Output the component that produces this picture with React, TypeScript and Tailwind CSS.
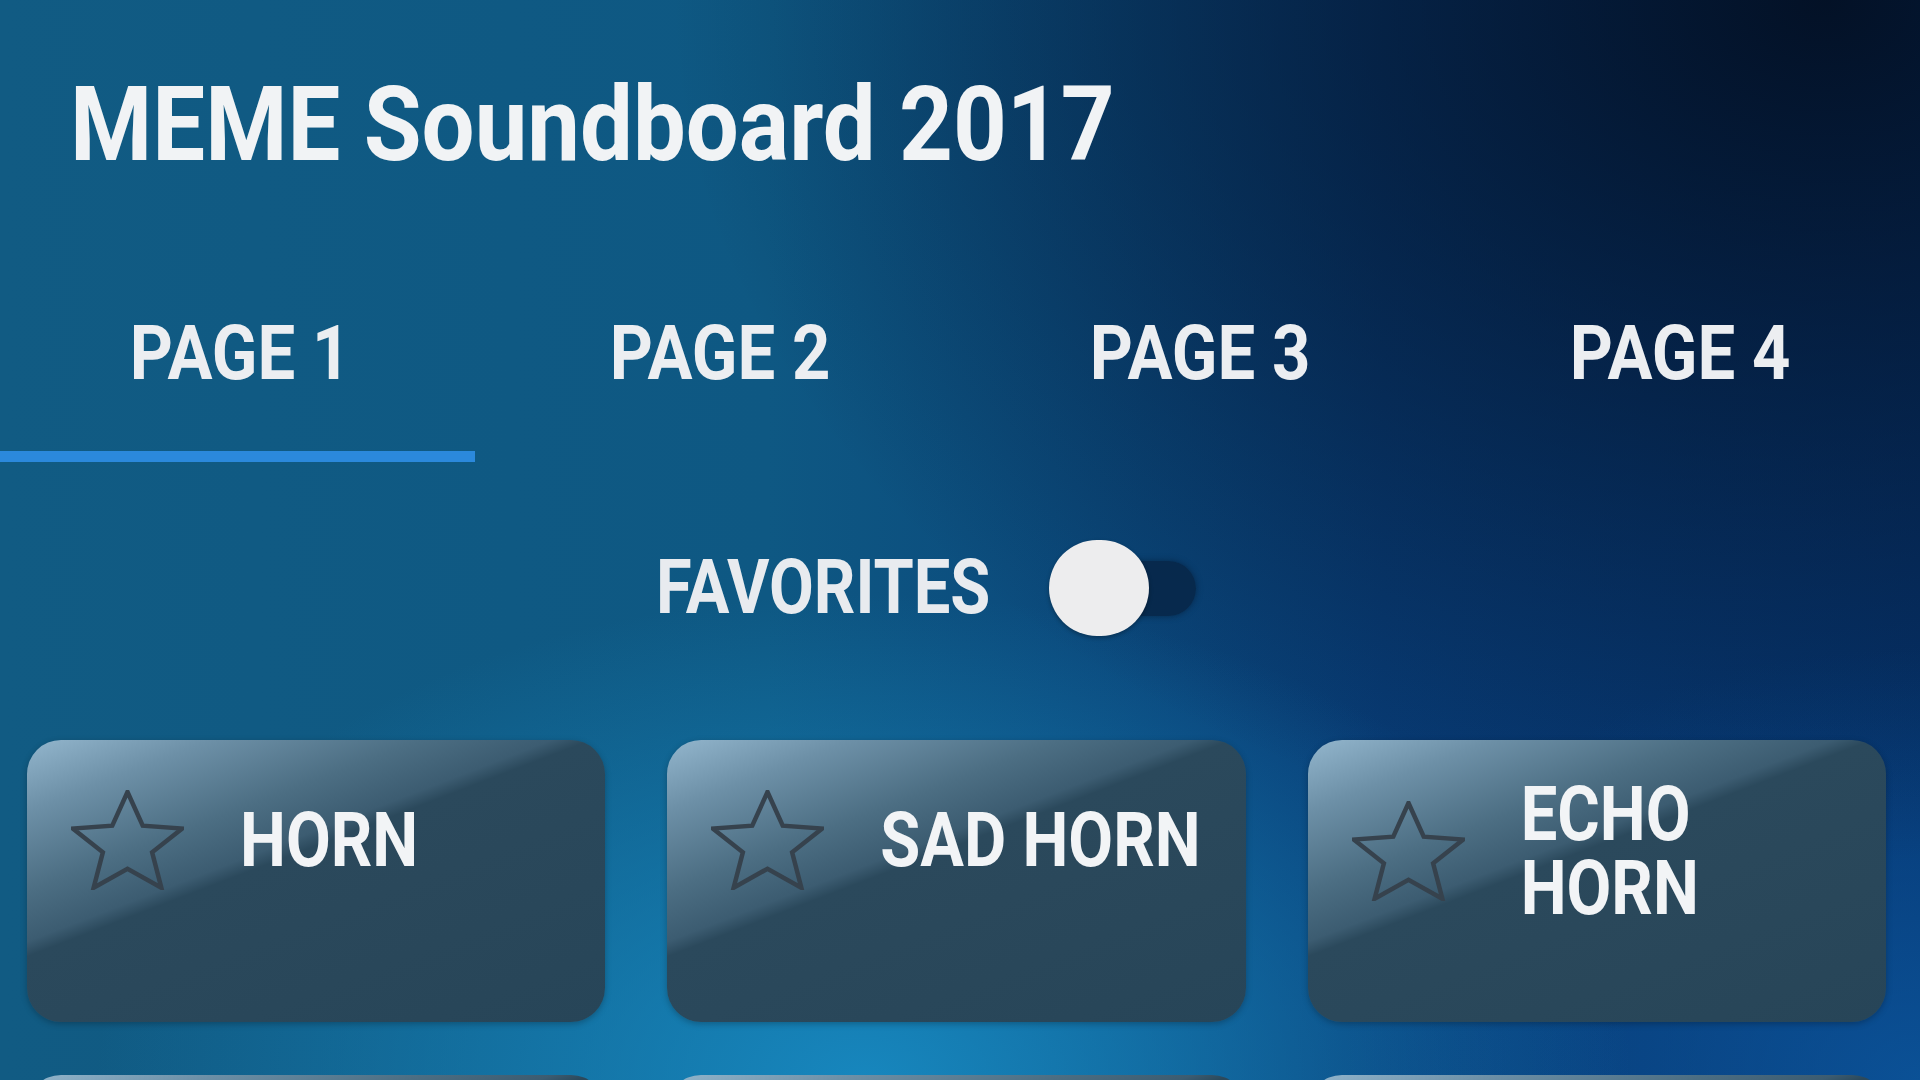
import React, { useState } from 'react';

type Sound = { id: string; label: string };

const PAGES = ['PAGE 1', 'PAGE 2', 'PAGE 3', 'PAGE 4'];

const SOUNDS: Sound[] = [
  { id: 'horn', label: 'HORN' },
  { id: 'sad-horn', label: 'SAD HORN' },
  { id: 'echo-horn', label: 'ECHO HORN' },
];

const CARD_BG =
  'bg-[linear-gradient(159deg,#93b6cd_0%,#6d90a7_14%,#4c6e83_30%,#3c5c71_40%,#2b495c_43%,#274558_100%)]';

// outline star, stretched to fill its box
const StarIcon: React.FC = () => (
  <svg viewBox="-3 0 106 102" preserveAspectRatio="none" className="w-[113px] h-[100px] shrink-0">
    <polygon
      points="50,2 64.28,36.34 101.35,39.31 73.11,63.51 81.75,99.69 50,80.3 18.25,99.69 26.89,63.51 -1.35,39.31 35.72,36.34"
      fill="none"
      stroke="#36424d"
      strokeWidth={4.5}
      strokeLinejoin="miter"
      vectorEffect="non-scaling-stroke"
    />
  </svg>
);

const SoundButton: React.FC<{ sound: Sound }> = ({ sound }) => (
  <button
    className={`h-[282px] rounded-[34px] text-left flex flex-col justify-start ${CARD_BG} shadow-[0_2px_6px_rgba(0,0,0,0.25)]`}
  >
    {/* row grows downward when the label wraps */}
    <div className="mt-[49px] min-h-[102px] w-full flex items-center pl-[44px] pr-[30px]">
      <StarIcon />
      <span className="ml-[56px] text-[65px] leading-[62px] font-bold text-[#f2f4f6] scale-y-[1.18] max-w-[340px]">
        {sound.label}
      </span>
    </div>
  </button>
);

export default function App() {
  const [page, setPage] = useState(0);
  const [favoritesOnly, setFavoritesOnly] = useState(false);

  return (
    <div className="w-[1920px] h-[1080px] overflow-hidden flex flex-col font-['Roboto','Liberation_Sans',sans-serif] bg-[radial-gradient(ellipse_60%_80%_at_95%_0%,rgba(3,16,36,0.97)_0%,rgba(3,16,36,0)_100%),radial-gradient(ellipse_40%_45%_at_45%_100%,rgba(24,140,196,0.9)_0%,rgba(24,140,196,0)_100%),radial-gradient(ellipse_30%_40%_at_100%_100%,rgba(12,88,160,0.8)_0%,rgba(12,88,160,0)_100%),linear-gradient(90deg,#115b83_0%,#0e5883_40%,#083c76_72%,#06346e_100%)]">
      {/* toolbar */}
      <header className="h-[248px] shrink-0 flex items-center pl-[70px]">
        <h1 className="text-[94px] leading-none font-bold text-[#f1f3f5] scale-y-[1.11] origin-left">
          MEME Soundboard 2017
        </h1>
      </header>

      {/* page tabs */}
      <nav className="h-[214px] shrink-0 flex">
        {PAGES.map((p, i) => (
          <button key={p} onClick={() => setPage(i)} className="flex-1 flex flex-col">
            <div className="flex-1 flex items-center justify-center pt-[8px]">
              <span className="text-[67px] leading-none font-bold text-[#eceef1] scale-y-[1.12]">{p}</span>
            </div>
            <div className={`h-[11px] w-[475px] ${page === i ? 'bg-[#2b89dc]' : ''}`} />
          </button>
        ))}
      </nav>

      {/* favorites filter */}
      <div className="h-[252px] shrink-0 flex items-center pl-[656px]">
        <span className="text-[65px] leading-none font-bold text-[#e8ebef] scale-y-[1.16]">FAVORITES</span>
        <button onClick={() => setFavoritesOnly(!favoritesOnly)} className="relative ml-[56px] w-[150px] h-[96px]">
          <div className="absolute right-0 top-[21px] w-[122px] h-[55px] rounded-full bg-[#072646]/85 shadow-[0_0_6px_rgba(2,20,40,0.5)]" />
          <div className="absolute left-[3px] top-0 w-[100px] h-[96px] rounded-full bg-[#ededee] shadow-[0_2px_4px_rgba(0,0,0,0.3)]" />
        </button>
      </div>

      {/* sound grid */}
      <div className="grid grid-cols-3 gap-x-[62px] gap-y-[53px] pl-[27px] pr-[34px] pt-[26px]">
        {SOUNDS.map(s => (
          <SoundButton key={s.id} sound={s} />
        ))}
        {/* next row, below the fold */}
        {[0, 1, 2].map(i => (
          <div key={i} className={`h-[282px] rounded-[34px] ${CARD_BG}`} />
        ))}
      </div>
    </div>
  );
}
